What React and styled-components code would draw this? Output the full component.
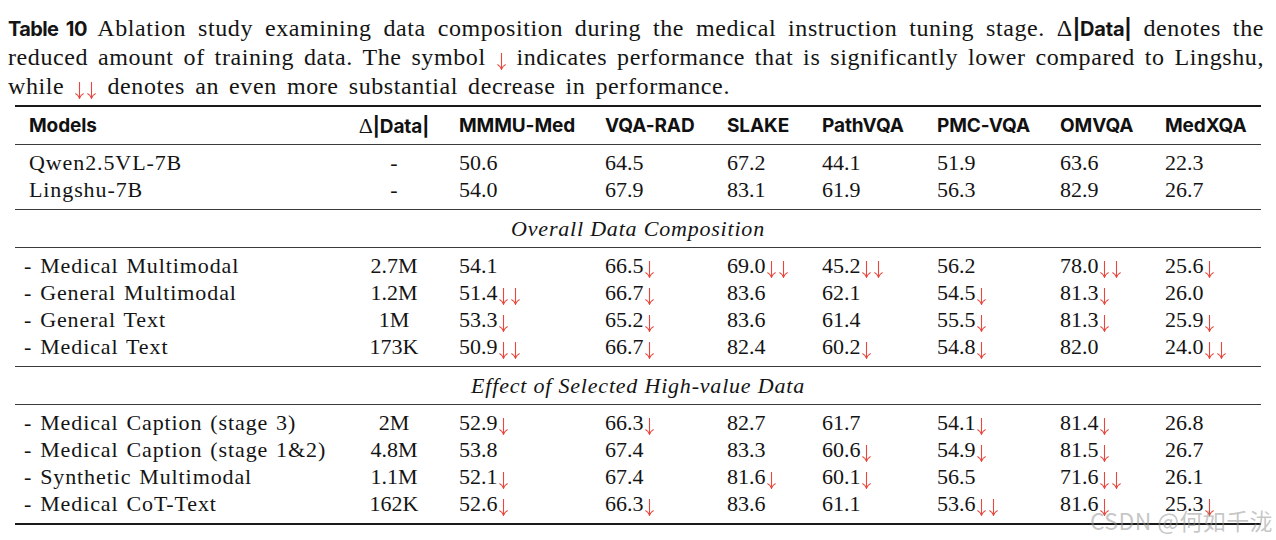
import React from "react";
import styled, { createGlobalStyle } from "styled-components";

const GlobalStyle = createGlobalStyle`
  html, body {
    margin: 0;
    padding: 0;
    background: #ffffff;
  }
  body {
    font-family: "Liberation Serif", "Times New Roman", serif;
    color: #141414;
  }
`;

const columns = [
  { label: "Models", width: 340, align: "left", pad: 14 },
  { label: "data", width: 78, align: "center", pad: 0 },
  { label: "MMMU-Med", width: 146, align: "left", pad: 26 },
  { label: "VQA-RAD", width: 122, align: "left", pad: 26 },
  { label: "SLAKE", width: 95, align: "left", pad: 26 },
  { label: "PathVQA", width: 115, align: "left", pad: 26 },
  { label: "PMC-VQA", width: 123, align: "left", pad: 26 },
  { label: "OMVQA", width: 105, align: "left", pad: 26 },
  { label: "MedXQA", width: 122, align: "left", pad: 26 },
];

const baseRows = [
  ["Qwen2.5VL-7B", "-", "50.6", "64.5", "67.2", "44.1", "51.9", "63.6", "22.3"],
  ["Lingshu-7B", "-", "54.0", "67.9", "83.1", "61.9", "56.3", "82.9", "26.7"],
];

const sections = [
  {
    title: "Overall Data Composition",
    rows: [
      ["- Medical Multimodal", "2.7M", "54.1", "66.5↓", "69.0↓↓", "45.2↓↓", "56.2", "78.0↓↓", "25.6↓"],
      ["- General Multimodal", "1.2M", "51.4↓↓", "66.7↓", "83.6", "62.1", "54.5↓", "81.3↓", "26.0"],
      ["- General Text", "1M", "53.3↓", "65.2↓", "83.6", "61.4", "55.5↓", "81.3↓", "25.9↓"],
      ["- Medical Text", "173K", "50.9↓↓", "66.7↓", "82.4", "60.2↓", "54.8↓", "82.0", "24.0↓↓"],
    ],
  },
  {
    title: "Effect of Selected High-value Data",
    rows: [
      ["- Medical Caption (stage 3)", "2M", "52.9↓", "66.3↓", "82.7", "61.7", "54.1↓", "81.4↓", "26.8"],
      ["- Medical Caption (stage 1&2)", "4.8M", "53.8", "67.4", "83.3", "60.6↓", "54.9↓", "81.5↓", "26.7"],
      ["- Synthetic Multimodal", "1.1M", "52.1↓", "67.4", "81.6↓", "60.1↓", "56.5", "71.6↓↓", "26.1"],
      ["- Medical CoT-Text", "162K", "52.6↓", "66.3↓", "83.6", "61.1", "53.6↓↓", "81.6↓", "25.3↓"],
    ],
  },
];

const Page = styled.div`
  position: relative;
  width: 1276px;
  height: 540px;
  overflow: hidden;
`;

const Caption = styled.div`
  padding: 14px 12px 0 8px;
  font-size: 24px;
  letter-spacing: 0.6px;
`;

const CaptionLine = styled.div`
  height: 29px;
  line-height: 29px;
  white-space: nowrap;
  word-spacing: ${(props) => (props.$justify ? 2 : 3.5)}px;
  text-align: ${(props) => (props.$justify ? "justify" : "left")};
  text-align-last: ${(props) => (props.$justify ? "justify" : "left")};
  ${(props) => props.$justify && "white-space: normal; overflow: hidden;"}
`;

const Label = styled.span`
  font-family: Inter, "Open Sans", sans-serif;
  font-weight: 700;
  font-size: 20px;
  letter-spacing: -0.6px;
  word-spacing: 0;
`;

const SansBold = styled.span`
  font-family: Inter, "Open Sans", sans-serif;
  font-weight: 700;
  font-size: ${(props) => props.$size || 19}px;
  letter-spacing: -0.2px;
`;

const Delta = styled.span`
  font-family: "Liberation Serif", serif;
  font-weight: 400;
  font-size: 22px;
`;

const ArrowSvg = styled.svg`
  display: inline-block;
  width: 11px;
  height: 18px;
  vertical-align: -5px;
  margin-right: ${(props) => (props.$tight ? 1 : 0)}px;
`;

const Table = styled.table`
  margin: 4px 0 0 15px;
  width: 1246px;
  border-collapse: collapse;
  table-layout: fixed;
  font-size: 22px;
`;

const Col = styled.col`
  width: ${(props) => props.$width}px;
`;

const HeadRow = styled.tr`
  border-top: 2px solid #1a1a1a;
  border-bottom: 1px solid #3a3a3a;
`;

const HeadCell = styled.th`
  height: 37px;
  padding: 0 0 0 ${(props) => props.$pad}px;
  text-align: ${(props) => props.$align};
  font-family: Inter, "Open Sans", sans-serif;
  font-weight: 700;
  font-size: 19px;
  letter-spacing: -0.1px;
  white-space: nowrap;
  color: #111;
`;

const Row = styled.tr`
  border-bottom: ${(props) =>
    props.$end ? (props.$thick ? "2px solid #1a1a1a" : "1px solid #3a3a3a") : "none"};
`;

const Cell = styled.td`
  height: 27px;
  line-height: 27px;
  padding: ${(props) => (props.$first ? 4 : 0)}px 0
    ${(props) => (props.$end ? 6 : 0)}px ${(props) => props.$pad}px;
  text-align: ${(props) => props.$align};
  white-space: nowrap;
  vertical-align: middle;
  letter-spacing: ${(props) => (props.$name ? 0.9 : 0)}px;
  word-spacing: ${(props) => (props.$name ? 1.5 : 0)}px;
  overflow: visible;
`;

const SectionCell = styled.td`
  height: 37px;
  padding: 0;
  text-align: center;
  font-style: italic;
  font-size: 22px;
  letter-spacing: 0.8px;
`;

const Watermark = styled.div`
  position: absolute;
  right: 3px;
  bottom: 7px;
  font-family: "Noto Sans CJK SC", "Noto Sans", sans-serif;
  font-size: 23px;
  line-height: 26px;
  color: rgba(150, 150, 150, 0.55);
  letter-spacing: 0.4px;
`;

const Arrow = ({ tight }) => (
  <ArrowSvg viewBox="0 0 11 18" $tight={tight}>
    <path
      d="M5.5 1 V16.6 M1.4 12.4 Q4.4 14 5.5 17.2 Q6.6 14 9.6 12.4"
      fill="none"
      stroke="#e5483e"
      strokeWidth="1.1"
    />
  </ArrowSvg>
);

const Arrows = ({ count }) => (
  <>
    {Array.from({ length: count }).map((_, i) => (
      <Arrow key={i} tight={i < count - 1} />
    ))}
  </>
);

const Value = ({ text }) => {
  const arrows = (text.match(/↓/g) || []).length;
  const num = text.replace(/↓/g, "");
  return (
    <>
      {num}
      {arrows > 0 && <Arrows count={arrows} />}
    </>
  );
};

const BodyRows = ({ rows, thick }) =>
  rows.map((row, i) => {
    const first = i === 0;
    const end = i === rows.length - 1;
    return (
      <Row key={row[0]} $end={end} $thick={thick && end}>
        {row.map((cell, c) => (
          <Cell
            key={c}
            $first={first}
            $end={end}
            $name={c === 0}
            $align={columns[c].align}
            $pad={c === 0 && cell.startsWith("- ") ? 9 : columns[c].pad}
          >
            {c === 0 ? cell : <Value text={cell} />}
          </Cell>
        ))}
      </Row>
    );
  });

export default function App() {
  return (
    <Page>
      <GlobalStyle />
      <Caption>
        <CaptionLine $justify>
          <Label>Table 10</Label> Ablation study examining data composition during the
          medical instruction tuning stage. Δ<SansBold $size={20}>|Data|</SansBold> denotes the
        </CaptionLine>
        <CaptionLine $justify>
          reduced amount of training data. The symbol <Arrow /> indicates performance that is
          significantly lower compared to Lingshu,
        </CaptionLine>
        <CaptionLine>
          while <Arrows count={2} /> denotes an even more substantial decrease in performance.
        </CaptionLine>
      </Caption>
      <Table>
        <colgroup>
          {columns.map((col) => (
            <Col key={col.label} $width={col.width} />
          ))}
        </colgroup>
        <thead>
          <HeadRow>
            {columns.map((col) => (
              <HeadCell key={col.label} $pad={col.pad} $align={col.align}>
                {col.label === "data" ? (
                  <>
                    <Delta>Δ</Delta>|Data|
                  </>
                ) : (
                  col.label
                )}
              </HeadCell>
            ))}
          </HeadRow>
        </thead>
        <tbody>
          <BodyRows rows={baseRows} />
        </tbody>
        {sections.map((section, s) => (
          <tbody key={section.title}>
            <Row $end>
              <SectionCell colSpan={columns.length}>{section.title}</SectionCell>
            </Row>
            <BodyRows rows={section.rows} thick={s === sections.length - 1} />
          </tbody>
        ))}
      </Table>
      <Watermark>CSDN @何如千泷</Watermark>
    </Page>
  );
}
